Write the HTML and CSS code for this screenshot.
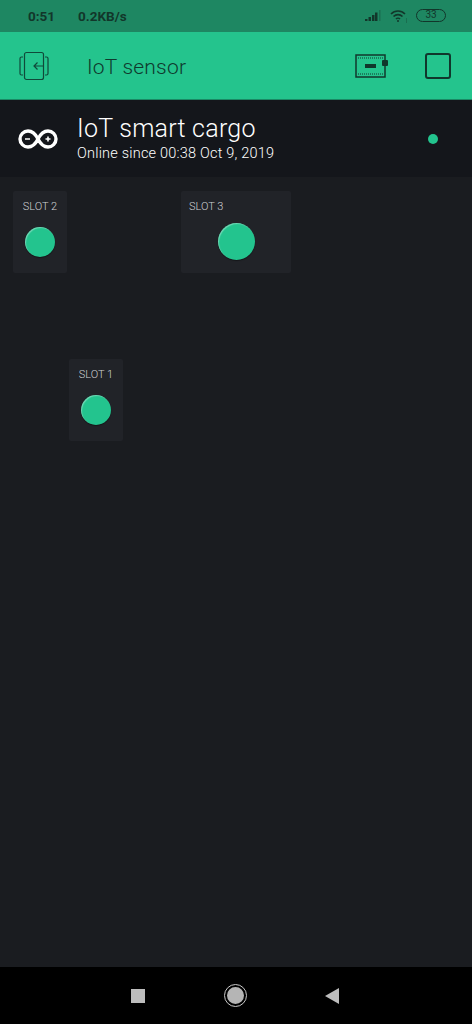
FILE: index.html
```html
<!DOCTYPE html>
<html lang="en">
<head>
<meta charset="utf-8">
<title>IoT sensor</title>
<link rel="stylesheet" href="styles.css">
</head>
<body>
<div class="phone">
  <div class="status">
    <div class="status-left"><span>0:51</span><span>0.2KB/s</span></div>
    <div class="status-right">
      <svg width="18" height="13" viewBox="0 0 18 13"><path d="M1 12h2.500V10H1zM4.500 12H7V8H4.500zM8 12h2.500V6H8zM11 12h2.500V3.500H11z" fill="#12362a"/><path d="M15 12h1.500V1H15z" fill="#1a6e50"/></svg>
      <svg width="18" height="14" viewBox="0 0 18 14" fill="none" stroke="#12362a" stroke-width="1.600"><path d="M1 5c4-4 10-4 14 0"/><path d="M3.500 7.500c2.500-2.500 6.500-2.500 9 0"/><path d="M6 10c1-1 3-1 4 0"/><circle cx="8" cy="12" r="1" fill="#12362a" stroke="none"/><path d="M16.500 9v5" stroke="#1a6e50" stroke-width="1"/></svg>
      <div class="battery">33</div>
    </div>
  </div>
  <header class="appbar">
    <svg class="back" width="30" height="30" viewBox="0 0 30 30" fill="none" stroke="#10493a" stroke-width="1.200"><rect x="5.500" y="1.500" width="19" height="27" rx="2"/><path d="M4 6H2.500A1.500 1.500 0 0 0 1 7.500v15A1.500 1.500 0 0 0 2.500 24H4M26 6h1.500A1.500 1.500 0 0 1 29 7.500v15a1.500 1.500 0 0 1-1.500 1.500H26"/><path d="M25 15H15M18.500 11.500 15 15l3.500 3.500"/></svg>
    <h1 class="title">IoT sensor</h1>
    <div class="actions">
      <svg width="34" height="26" viewBox="0 0 34 26"><rect x="1" y="2" width="29" height="22" fill="none" stroke="#10372c" stroke-width="1.500"/><path d="M3 5h25M3 21h25" stroke="#10372c" stroke-width="1" stroke-dasharray="1 1"/><rect x="10" y="11" width="11" height="4" fill="#10372c"/><rect x="27" y="7" width="6" height="6" rx="1" fill="#10372c"/></svg>
      <div class="stop"></div>
    </div>
  </header>
  <section class="device">
    <svg class="logo" width="40" height="22" viewBox="0 0 40 22" fill="none" stroke="#fff"><path d="M20 11c-2.500-5-5.500-8-10-8a8 8 0 0 0 0 16c4.500 0 7.500-3 10-8s5.500-8 10-8a8 8 0 0 1 0 16c-4.500 0-7.500-3-10-8z" stroke-width="3.400"/><path d="M7 11h5M27.500 11h5M30 8.500v5" stroke-width="1.600"/></svg>
    <div class="device-text">
      <div class="device-name">IoT smart cargo</div>
      <div class="device-since">Online since 00:38 Oct 9, 2019</div>
    </div>
    <span class="dot"></span>
  </section>
  <main class="canvas">
    <div class="widget slot-2"><span class="label">SLOT 2</span><span class="led"></span></div>
    <div class="widget slot-3"><span class="label">SLOT 3</span><span class="led led-lg"></span></div>
    <div class="widget slot-1"><span class="label">SLOT 1</span><span class="led"></span></div>
  </main>
  <nav class="navbar">
    <span class="nav-square"></span>
    <span class="nav-circle"></span>
    <span class="nav-back"></span>
  </nav>
</div>
</body>
</html>
```
FILE: styles.css
```css
* { box-sizing: border-box; }
html, body { margin: 0; padding: 0; }
body { width: 472px; height: 1024px; overflow: hidden; background: #1a1c21; font-family: "Roboto", "Liberation Sans", sans-serif; }
.phone { display: flex; flex-direction: column; height: 1024px; }

.status { height: 32px; background: #1e8762; display: flex; align-items: center; justify-content: space-between; padding: 0 26px 1px 28px; color: #12362a; font-size: 13.500px; font-weight: 700; flex: none; }
.status-left { display: flex; gap: 23px; }
.status-right { display: flex; align-items: center; gap: 8px; }
.battery { width: 30px; height: 13px; border: 1.500px solid #12362a; border-radius: 7px; font-size: 10px; font-weight: 400; line-height: 10px; text-align: center; }

.appbar { height: 68px; background: #24c48d; border-bottom: 1px solid #1a8a65; display: flex; align-items: center; padding: 0 21px 0 19px; flex: none; }
.back { flex: none; }
.title { margin: 2px 0 0 38px; flex: 1; font-size: 21px; font-weight: 300; letter-spacing: .2px; color: #0f3a2e; }
.actions { display: flex; align-items: center; gap: 36px; }
.stop { width: 26px; height: 26px; border: 2px solid #10372c; border-radius: 3px; }

.device { height: 77px; background: #14161b; display: flex; align-items: center; padding: 0 34px 0 18px; flex: none; }
.logo { flex: none; }
.device-text { flex: 1; margin-left: 19px; color: #fff; }
.device-name { font-size: 25px; font-weight: 300; line-height: 30px; letter-spacing: .25px; }
.device-since { font-size: 14.500px; font-weight: 300; line-height: 20px; letter-spacing: .2px; }
.dot { width: 10px; height: 10px; border-radius: 50%; background: #23c48e; }

.canvas { flex: 1; background: #1a1c20; display: grid; grid-template-columns: repeat(8, 54px); grid-auto-rows: 82px; gap: 2px; padding: 14px 0 0 13px; align-content: start; }
.widget { background: #212328; display: flex; flex-direction: column; align-items: center; padding-top: 9px; border-radius: 2px; }
.slot-2 { grid-column: 1; grid-row: 1; }
.slot-3 { grid-column: 4 / span 2; grid-row: 1; }
.slot-1 { grid-column: 2; grid-row: 3; }
.slot-3 .label { align-self: flex-start; margin-left: 8px; }
.label { font-size: 11px; line-height: 14px; font-weight: 300; color: #d0d2d4; }
.led { width: 30px; height: 30px; margin-top: 13px; border-radius: 50%; background: #23c48e; box-shadow: inset 1px 1px 1px rgba(255,255,255,.35), 0 1px 1px rgba(0,0,0,.4); }
.led-lg { width: 37px; height: 37px; margin-top: 9px; }

.navbar { height: 57px; background: #000; display: flex; align-items: center; flex: none; padding: 0 133px 0 131px; justify-content: space-between; }
.nav-square { width: 14px; height: 14px; background: #bdbdbd; }
.nav-circle { width: 21px; height: 21px; border-radius: 50%; background: #b5b5b5; border: 2px solid #000; outline: 1.500px solid #c8c8c8; }
.nav-back { width: 0; height: 0; border-style: solid; border-width: 8px 14px 8px 0; border-color: transparent #bdbdbd transparent transparent; }
```
